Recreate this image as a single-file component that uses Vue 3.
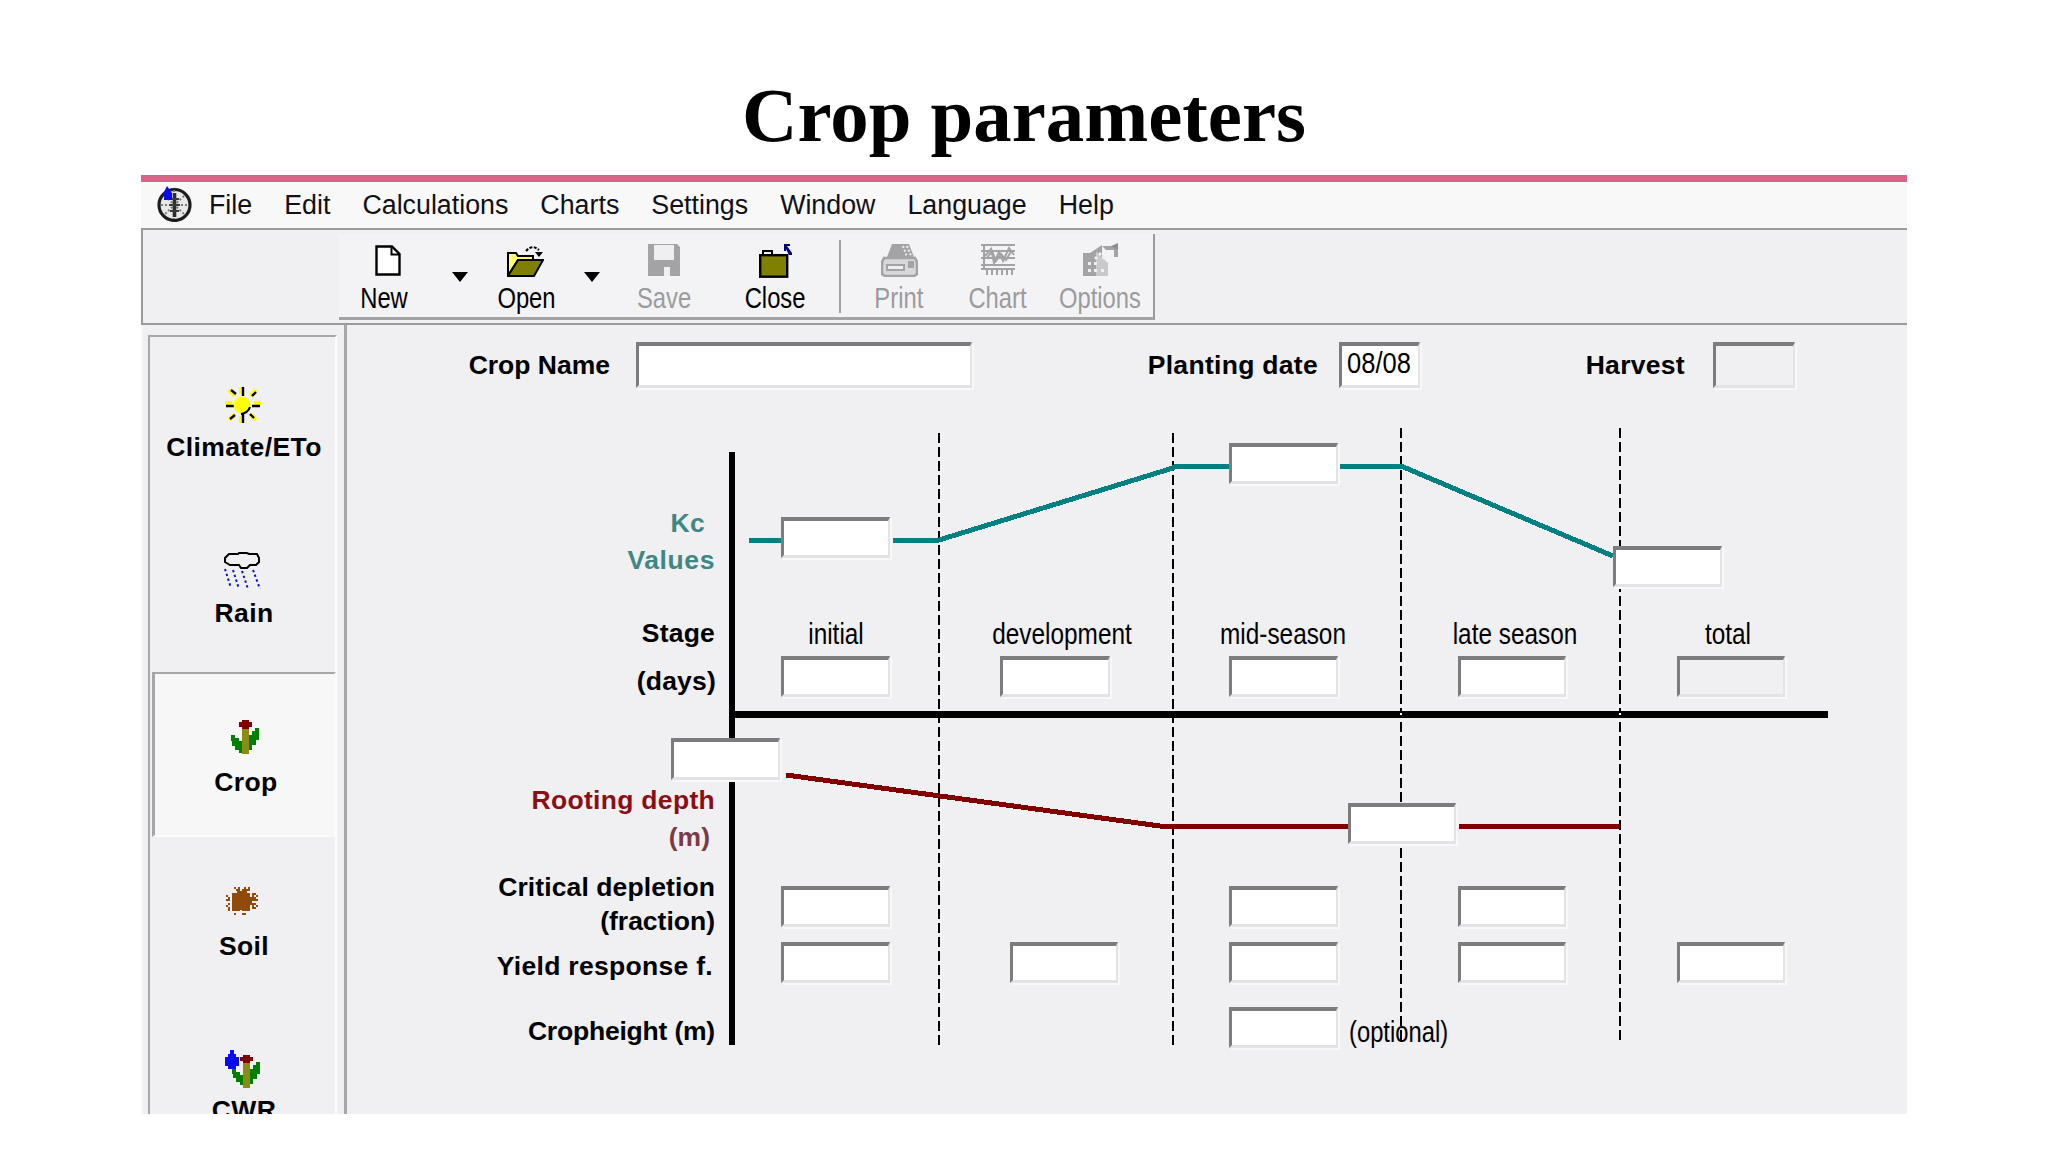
<script setup>
const OX = 347
const OY = 325
const box = (x, y, w, h) => ({
  left: x - OX + 'px',
  top: y - OY + 'px',
  width: w + 'px',
  height: h + 'px'
})

const menus = ['File', 'Edit', 'Calculations', 'Charts', 'Settings', 'Window', 'Language', 'Help']

const tools = [
  { kind: 'tool', label: 'New', icon: 'new', w: 90, ix: 8 },
  { kind: 'arrow', w: 62 },
  { kind: 'tool', label: 'Open', icon: 'open', w: 70, ix: -2 },
  { kind: 'arrow', w: 61 },
  { kind: 'tool', label: 'Save', icon: 'save', w: 84, off: true },
  { kind: 'tool', label: 'Close', icon: 'close', w: 128, ml: 5, ix: 2 },
  { kind: 'sep', w: 2 },
  { kind: 'tool', label: 'Print', icon: 'print', w: 116, off: true },
  { kind: 'tool', label: 'Chart', icon: 'chart', w: 80, off: true },
  { kind: 'tool', label: 'Options', icon: 'options', w: 110, ml: 8, off: true }
]

const tabs = [
  { label: 'Climate/ETo', icon: 'sun', mt: 9, it: 0 },
  { label: 'Rain', icon: 'rain', mt: 10, it: 0 },
  { label: 'Crop', icon: 'crop', on: true, mt: 12, it: 0 },
  { label: 'Soil', icon: 'soil', mt: 13, it: 0 },
  { label: 'CWR', icon: 'cwr', mt: 8, it: 4 }
]

const soilDots = []
for (let i = 0; i < 34; i++) {
  for (let j = 0; j < 30; j++) {
    const dx = (i - 15) / 17
    const dy = (j - 15) / 15
    const r = dx * dx + dy * dy
    const h = (i * 7 + j * 13 + i * j * 3) % 10
    if (i % 2 === 0 && j % 2 === 0 && r < 1 && h < (r < 0.35 ? 10 : r < 0.65 ? 7 : 4)) {
      soilDots.push({ x: i, y: j })
    }
  }
}

const fields = [
  [636, 342, 336, 46], [1339, 342, 81, 46, false, '08/08'], [1713, 342, 82, 46, true],
  [781, 517, 109, 41], [1229, 443, 109, 41], [1613, 546, 109, 41],
  [781, 656, 109, 41], [1000, 656, 110, 41], [1229, 656, 109, 41], [1458, 656, 108, 41], [1677, 656, 108, 41, true],
  [671, 738, 109, 42], [1348, 803, 108, 41],
  [781, 886, 109, 41], [1229, 886, 109, 41], [1458, 886, 108, 41],
  [781, 942, 109, 41], [1010, 942, 108, 41], [1229, 942, 109, 41], [1458, 942, 108, 41], [1677, 942, 108, 41],
  [1229, 1007, 109, 41]
].map(([x, y, w, h, off, value]) => ({ style: box(x, y, w, h), off, value: value || '' }))

const labels = [
  ['Crop Name', 610, 350, '', 0], ['Planting date', 1318, 350, '', 0.3], ['Harvest', 1685, 350, '', 0.3],
  ['Kc', 705, 508, 'teal', 0.3], ['Values', 715, 545, 'teal', 0.6],
  ['Stage', 715, 618, '', 0.2], ['(days)', 716, 666, '', 0.2],
  ['Rooting depth', 715, 785, 'red', 0.3], ['(m)', 710, 822, 'redsoft', 0],
  ['Critical depletion', 715, 872, '', 0.1], ['(fraction)', 715, 906, '', 0],
  ['Yield response f.', 713, 951, '', 0.3], ['Cropheight (m)', 715, 1016, '', -0.2]
].map(([text, right, top, tone, ls]) => ({
  text,
  tone,
  style: { ...box(right - 320, top, 320, 30), letterSpacing: ls + 'px' }
}))

const stages = [
  ['initial', 836], ['development', 1062], ['mid-season', 1283], ['late season', 1515], ['total', 1728]
].map(([text, cx]) => ({ text, style: box(cx - 90, 619, 180, 30) }))

const dashes = [
  { x: 939, y1: 433, y2: 1045 },
  { x: 1173, y1: 433, y2: 1045 },
  { x: 1401, y1: 428, y2: 1042 },
  { x: 1620, y1: 428, y2: 1040 }
]
</script>

<template>
  <div class="page">
    <h1 class="title">Crop parameters</h1>

    <div class="app">
      <div class="stripe"></div>

      <nav class="menu">
        <svg class="logo" width="37" height="37" viewBox="0 0 37 37">
          <circle cx="18.5" cy="20" r="15.5" fill="#e8e8e8" stroke="#1c1c1c" stroke-width="3.2" />
          <path d="M18 5V34M5 20H32M9 11L28 29M28 11L9 29" stroke="#7a7a7a" stroke-width="2" stroke-dasharray="2 2" />
          <path d="M18.5 8V32" stroke="#2c2c2c" stroke-width="3.6" />
          <path d="M14 14H23M13 20H24M14 26H23" stroke="#3a3a3a" stroke-width="2.2" />
          <path d="M11 1L16 8V15H8V7Z" fill="#0a0af0" />
        </svg>
        <span v-for="m in menus" :key="m" class="menu-item">{{ m }}</span>
      </nav>

      <div class="toolbar">
        <div class="panel">
          <template v-for="t in tools" :key="t.label || t.kind + t.w">
            <div v-if="t.kind === 'tool'" class="tool" :class="{ off: t.off }" :style="{ width: t.w + 'px', marginLeft: (t.ml || 0) + 'px' }">
              <div class="tool-icon" :style="{ marginLeft: (t.ix || 0) + 'px' }">
                <svg v-if="t.icon === 'new'" width="26" height="31" viewBox="0 0 26 31">
                  <path d="M1.5 1.5H17L24.5 9V29.5H1.5Z" fill="#fff" stroke="#000" stroke-width="2.4" />
                  <path d="M16.5 1.5V9.5H24.5" fill="none" stroke="#000" stroke-width="2" />
                </svg>
                <svg v-else-if="t.icon === 'open'" width="37" height="33" viewBox="0 0 37 33">
                  <path d="M19 7Q25 0 32 6" fill="none" stroke="#000" stroke-width="2" stroke-dasharray="3 1.5" />
                  <path d="M28 8H36L32 13Z" fill="#000" />
                  <path d="M1 9H9L11 12H26V16H11L1 32Z" fill="#ffff70" stroke="#000" stroke-width="2" />
                  <path d="M11 16H36L27 32H1Z" fill="#808000" stroke="#000" stroke-width="2" />
                </svg>
                <svg v-else-if="t.icon === 'save'" width="32" height="34" viewBox="0 0 32 34">
                  <path d="M0 1H29L32 4V33H0Z" fill="#a3a3a5" />
                  <rect x="6" y="2" width="20" height="15" fill="#efeff1" />
                  <rect x="16" y="24" width="6" height="9" fill="#efeff1" />
                </svg>
                <svg v-else-if="t.icon === 'close'" width="34" height="35" viewBox="0 0 34 35">
                  <path d="M4 12V8H13V12" fill="none" stroke="#000" stroke-width="2" />
                  <rect x="1.2" y="12.2" width="27" height="21.5" fill="#808000" stroke="#000" stroke-width="2.4" />
                  <path d="M25 1H31V3H28L33 10V12H30L27 6V8H25Z" fill="#000080" />
                </svg>
                <svg v-else-if="t.icon === 'print'" width="37" height="34" viewBox="0 0 37 34">
                  <path d="M11 1H28L33 14H6Z" fill="#a3a3a5" />
                  <path d="M26 3L31 15M22 3L26 14" stroke="#efeff1" stroke-width="2" stroke-dasharray="2 2" />
                  <path d="M3 15H34L36 19V31L33 33H4L1 31V19Z" fill="#d8d8da" stroke="#a3a3a5" stroke-width="2.6" />
                  <rect x="6" y="22" width="17" height="5" fill="#efeff1" stroke="#a3a3a5" stroke-width="2" />
                  <path d="M27 18H33V25H27Z" fill="#a3a3a5" />
                </svg>
                <svg v-else-if="t.icon === 'chart'" width="37" height="34" viewBox="0 0 37 34">
                  <g stroke="#a3a3a5" stroke-width="2" fill="none">
                    <path d="M2 2H36M2 8H36M2 15H36M2 22H36" />
                    <path d="M5 2V25M2 26H36" />
                    <path d="M6 13L12 6L15 20L20 9L24 18L30 5L35 12M8 15L13 8L17 18L22 11L27 17L33 7" />
                    <path d="M8 27V32M13 27V32M18 27V32M23 27V32M28 27V32M33 27V32" />
                  </g>
                </svg>
                <svg v-else-if="t.icon === 'options'" width="37" height="34" viewBox="0 0 37 34">
                  <path d="M1 10H8L20 2V33H1Z" fill="#a3a3a5" />
                  <path d="M14 8L26 20V33H14Z" fill="#c9c9cb" />
                  <path d="M18 9l2 2 -2 2 -2 -2zM14 13l2 2 -2 2 -2 -2zM22 13l2 2 -2 2 -2 -2z" fill="#efeff1" />
                  <path d="M6 19h3v3H6zM12 19h3v3h-3zM6 26h3v3H6zM12 26h3v3h-3zM19 26h3v3h-3z" fill="#efeff1" />
                  <path d="M20 3H36V14H32V7H24Z" fill="#a3a3a5" />
                  <path d="M29 3L36 0V7Z" fill="#8d8d8f" />
                </svg>
              </div>
              <span class="tool-label">{{ t.label }}</span>
            </div>
            <div v-else-if="t.kind === 'arrow'" class="arrow-slot" :style="{ width: t.w + 'px' }">
              <span class="arrow"></span>
            </div>
            <div v-else class="sep"></div>
          </template>
        </div>
      </div>

      <div class="body">
        <aside class="sidebar">
          <div class="tabs">
            <div v-for="t in tabs" :key="t.label" class="tab" :class="{ pressed: t.on }">
              <div class="tab-icon" :style="{ marginTop: t.it + 'px' }">
                <svg v-if="t.icon === 'sun'" width="36" height="36" viewBox="0 0 36 36">
                  <g stroke="#ffff00" stroke-width="4">
                    <path d="M16 0V7M16 29V36M0 16H7M29 16H36M4 3L10 9M31 3L25 9M4 33L10 27M31 33L25 27" />
                  </g>
                  <g stroke="#000" stroke-width="2.4">
                    <path d="M18 0V9M18 27V36M1 19H9M27 19H35M6 3L11 7M31 5L27 9M5 32L10 28M29 31L25 27" />
                  </g>
                  <circle cx="17" cy="18" r="8.5" fill="#ffff00" />
                  <path d="M25 20Q23 26 16 27" fill="none" stroke="#000" stroke-width="2.2" />
                </svg>
                <svg v-else-if="t.icon === 'rain'" width="37" height="37" viewBox="0 0 37 37">
                  <path d="M5 2H14L15 1H23L25 2H33L35 6V10L32 13H26L23 16H17L15 13H6L1 10V6Z" fill="none" stroke="#000" stroke-width="2" />
                  <g fill="none" stroke="#1010d0" stroke-width="2" stroke-dasharray="2.4 2.6">
                    <path d="M1 17L7 36M9 18L15 37M18 19L24 37M29 18L36 37" />
                  </g>
                </svg>
                <svg v-else-if="t.icon === 'crop'" width="28" height="36" viewBox="0 0 28 36" shape-rendering="crispEdges">
                  <path d="M0 16H4V19H8V22H11V34H8V31H4V27H1Z" fill="#008000" />
                  <path d="M24 9H28V21H25V26H21V31H17V16H21V12H24Z" fill="#008000" />
                  <rect x="11" y="9" width="7" height="26" fill="#8c8c14" />
                  <path d="M11 1H18V3H21V8H18V10H11V8H8V3H11Z" fill="#800000" />
                </svg>
                <svg v-else-if="t.icon === 'soil'" width="34" height="30" viewBox="0 0 34 30" shape-rendering="crispEdges">
                  <rect v-for="(d, i) in soilDots" :key="i" :x="d.x" :y="d.y" width="2" height="2" fill="#8f4a0c" />
                  <path d="M11 6H21V12H24V20H20V25H12V20H9V12H11Z" fill="#8f4a0c" />
                </svg>
                <svg v-else-if="t.icon === 'cwr'" width="35" height="38" viewBox="0 0 35 38" shape-rendering="crispEdges">
                  <path d="M5 0H9V4H11V7H14V16H11V19H3V16H0V7H3V4H5Z" fill="#0a0af0" />
                  <g transform="translate(7 5)">
                    <path d="M0 14H4V17H8V20H11V30H8V27H4V23H1Z" fill="#008000" />
                    <path d="M24 7H28V19H25V24H21V29H17V14H21V10H24Z" fill="#008000" />
                    <rect x="11" y="7" width="7" height="26" fill="#8c8c14" />
                    <path d="M11 0H18V2H21V6H18V8H11V6H8V2H11Z" fill="#800000" />
                  </g>
                </svg>
              </div>
              <div class="tab-label" :style="{ marginTop: t.mt + 'px' }">{{ t.label }}</div>
            </div>
          </div>
        </aside>

        <main class="canvas">
          <span v-for="l in labels" :key="l.text" class="label" :class="l.tone" :style="l.style">{{ l.text }}</span>
          <span v-for="s in stages" :key="s.text" class="stage" :style="s.style">{{ s.text }}</span>
          <span class="optional" :style="box(1349, 1017, 130, 30)">(optional)</span>

          <svg class="diagram" width="1560" height="789" viewBox="347 325 1560 789">
            <rect x="729" y="452" width="6" height="593" fill="#000" />
            <rect x="735" y="711" width="1093" height="7" fill="#000" />
            <line v-for="d in dashes" :key="d.x" :x1="d.x" :x2="d.x" :y1="d.y1" :y2="d.y2" stroke="#000" stroke-width="2" stroke-dasharray="10 4" shape-rendering="crispEdges" />
            <rect x="1400" y="713" width="2" height="2" fill="#fff" />
            <rect x="1619" y="713" width="2" height="2" fill="#fff" />
            <g fill="none" stroke="#008080" stroke-width="5" shape-rendering="crispEdges">
              <path d="M749 540H781" />
              <path d="M893 540H939L1173 468L1176 466H1229" />
              <path d="M1340 466H1401L1613 556" />
            </g>
            <g fill="none" stroke="#800000" stroke-width="5" shape-rendering="crispEdges">
              <path d="M786 775L1160 826H1348" />
              <path d="M1459 826H1620" />
            </g>
          </svg>

          <div v-for="(f, i) in fields" :key="i" class="field" :class="{ off: f.off }" :style="f.style">
            <span v-if="f.value" class="field-text">{{ f.value }}</span>
          </div>
        </main>
      </div>
    </div>
  </div>
</template>

<style>
html, body { margin: 0; background: #fff; }
</style>

<style scoped>
.page {
  width: 2048px;
  height: 1152px;
  background: #fff;
  overflow: hidden;
  font-family: "Liberation Sans", Arial, sans-serif;
  color: #000;
}
.title {
  box-sizing: border-box;
  height: 175px;
  margin: 0;
  padding-top: 73px;
  text-align: center;
  font: bold 76.8px/86px "Liberation Serif", "Times New Roman", serif;
}
.app {
  width: 1766px;
  height: 939px;
  margin-left: 141px;
  display: flex;
  flex-direction: column;
  overflow: hidden;
  background: #f0eff1;
}
.stripe { height: 7px; flex: none; background: #da6188; }
.menu {
  box-sizing: border-box;
  height: 48px;
  flex: none;
  display: flex;
  align-items: center;
  gap: 32px;
  padding-left: 15px;
  background: #f8f8f9;
  border-bottom: 2px solid #9b9b9b;
}
.logo { margin-right: -16px; margin-top: -3px; }
.menu-item { font-size: 26.8px; line-height: 30px; color: #101018; }
.toolbar {
  box-sizing: border-box;
  height: 95px;
  flex: none;
  padding: 4px 0 0 196px;
  border-left: 2px solid #9b9b9b;
  border-bottom: 2px solid #9b9b9b;
}
.panel {
  box-sizing: border-box;
  width: 816px;
  height: 86px;
  display: flex;
  padding-top: 8px;
  background: #f3f3f5;
  border-right: 2px solid #9b9b9b;
  border-bottom: 3px solid #a3a3a3;
}
.tool {
  flex: none;
  display: flex;
  flex-direction: column;
  align-items: center;
}
.tool-icon {
  height: 36px;
  display: flex;
  align-items: center;
  justify-content: center;
}
.tool-label {
  margin-top: 5px;
  font-size: 29px;
  line-height: 30px;
  white-space: nowrap;
  transform: scaleX(0.82);
}
.tool.off .tool-label { color: #9b9b9d; }
.arrow-slot {
  flex: none;
  display: flex;
  justify-content: center;
  padding-top: 30px;
}
.arrow {
  width: 0;
  height: 0;
  border-left: 8px solid transparent;
  border-right: 8px solid transparent;
  border-top: 10px solid #000;
}
.sep {
  flex: none;
  width: 2px;
  height: 73px;
  margin-top: -2px;
  background: #a3a3a5;
}
.body { flex: 1; display: flex; min-height: 0; }
.sidebar {
  box-sizing: border-box;
  width: 206px;
  flex: none;
  padding: 10px 0 0 5px;
  border-left: 2px solid #f8f8f9;
  border-right: 3px solid #a6a6a8;
}
.tabs {
  box-sizing: border-box;
  width: 189px;
  padding-top: 3px;
  border-top: 2px solid #a6a6a8;
  border-left: 2px solid #a6a6a8;
  border-right: 2px solid #fbfbfc;
}
.tab {
  box-sizing: border-box;
  height: 165px;
  padding-top: 47px;
  text-align: center;
}
.tab.pressed {
  width: 184px;
  margin: 2px 0 -2px 2px;
  padding-top: 45px;
  border-top: 2px solid #a6a6a8;
  border-left: 3px solid #a6a6a8;
  border-right: 2px solid #fbfbfc;
  border-bottom: 2px solid #fbfbfc;
  background: #f7f7f8;
}
.tab-icon {
  height: 36px;
  display: flex;
  align-items: center;
  justify-content: center;
}
.tab-label {
  padding-left: 3px;
  font-size: 26.5px;
  font-weight: bold;
  line-height: 30px;
  letter-spacing: 0.4px;
  white-space: nowrap;
}
.canvas { position: relative; flex: 1; min-width: 0; }
.diagram { position: absolute; left: 0; top: 0; }
.label {
  position: absolute;
  text-align: right;
  font-size: 26.5px;
  font-weight: bold;
  line-height: 30px;
  white-space: nowrap;
}
.label.teal { color: #3f8784; }
.label.red { color: #8a0f14; }
.label.redsoft { color: #7d3a44; }
.stage, .optional {
  position: absolute;
  font-size: 29px;
  line-height: 30px;
  white-space: nowrap;
}
.stage { text-align: center; transform: scaleX(0.84); }
.optional { transform: scaleX(0.82); transform-origin: left center; }
.field {
  position: absolute;
  z-index: 1;
  box-sizing: border-box;
  padding: 2px 0 0 5px;
  background: #fff;
  border-style: solid;
  border-width: 4px 2px 3px 3px;
  border-color: #7c7c7e #e3e2e4 #e3e2e4 #7c7c7e;
  box-shadow: 2px 2px 0 #f8f8f9;
}
.field.off { background: #f0eff1; }
.field-text {
  display: block;
  font-size: 29px;
  line-height: 30px;
  white-space: nowrap;
  transform: scaleX(0.88);
  transform-origin: left center;
}
</style>
